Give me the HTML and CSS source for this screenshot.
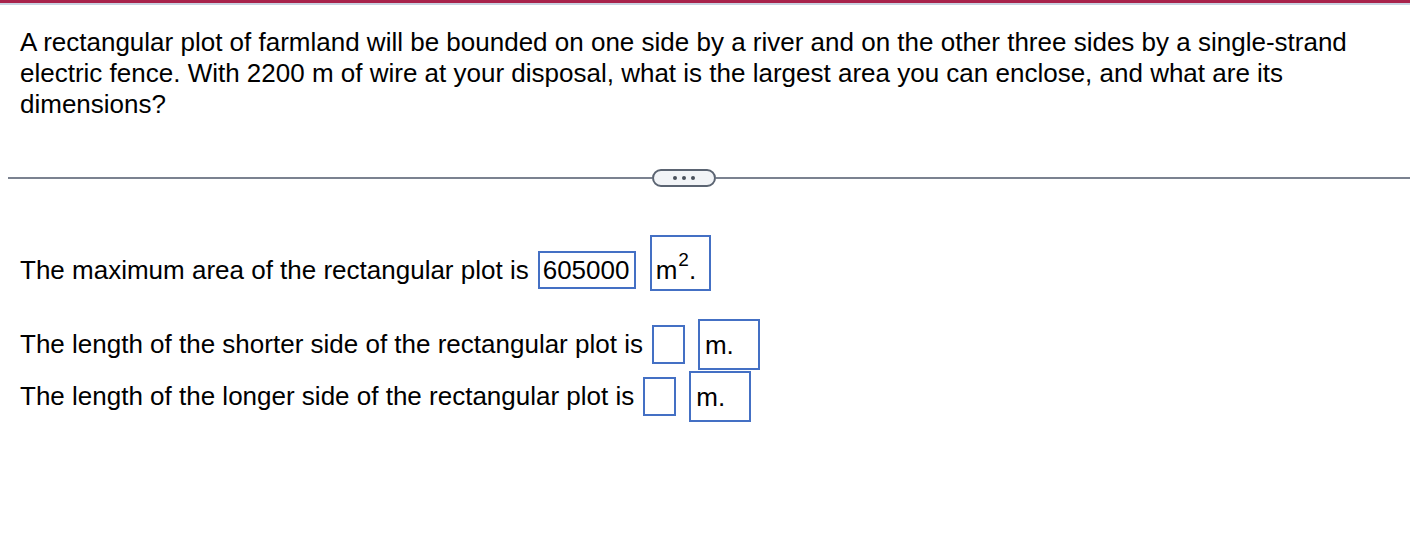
FILE: index.html
```html
<!DOCTYPE html>
<html>
<head>
<meta charset="utf-8">
<link rel="stylesheet" href="styles.css">
</head>
<body>
<div class="topbar"></div>
<div class="page">
  <p class="question">A rectangular plot of farmland will be bounded on one side by a river and on the other three sides by a single-strand electric fence. With 2200 m of wire at your disposal, what is the largest area you can enclose, and what are its dimensions?</p>
  <div class="divider">
    <span class="rule rule-left"></span>
    <span class="pill"><span class="dot"></span><span class="dot"></span><span class="dot"></span></span>
    <span class="rule rule-right"></span>
  </div>
  <div class="answers">
    <div class="row row-area">
      <span class="label">The maximum area of the rectangular plot is</span>
      <span class="box value">605000</span>
      <span class="box unit unit-sq">m<sup>2</sup>.</span>
    </div>
    <div class="row row-short">
      <span class="label">The length of the shorter side of the rectangular plot is</span>
      <span class="box empty"></span>
      <span class="box unit unit-m">m.</span>
    </div>
    <div class="row row-long">
      <span class="label">The length of the longer side of the rectangular plot is</span>
      <span class="box empty"></span>
      <span class="box unit unit-m">m.</span>
    </div>
  </div>
</div>
</body>
</html>
```
FILE: styles.css
```css
html, body {
  margin: 0;
  padding: 0;
  background: #ffffff;
}
body {
  font-family: "Liberation Sans", Arial, sans-serif;
  color: #000000;
  font-size: 26px;
}
.topbar {
  height: 3px;
  background: #a8234b;
  border-bottom: 2px solid #c9d3e1;
}
.page {
  padding: 0 0 0 8px;
}
.question {
  margin: 22px 0 0 12px;
  line-height: 31px;
  padding-right: 40px;
}
.divider {
  display: flex;
  align-items: center;
  margin-top: 49px;
  height: 18px;
}
.rule {
  height: 2px;
  background: #7b8290;
}
.rule-left {
  width: 644px;
}
.rule-right {
  flex: 1;
}
.pill {
  box-sizing: border-box;
  display: flex;
  align-items: center;
  justify-content: center;
  gap: 5px;
  width: 64px;
  height: 18px;
  border: 2px solid #5b6472;
  border-radius: 9px;
  background: #f2f4f7;
}
.dot {
  width: 4px;
  height: 4px;
  border-radius: 50%;
  background: #4a515c;
}
.answers {
  padding-left: 12px;
}
.row {
  display: flex;
  align-items: center;
}
.row-area {
  margin-top: 62px;
}
.row-short {
  margin-top: 28px;
}
.row-long {
  margin-top: 1px;
}
.box {
  box-sizing: border-box;
  border: 2px solid #4470c4;
  display: inline-block;
}
.value {
  margin-left: 9px;
  width: 98px;
  height: 38px;
  padding: 1px 0 0 3px;
  line-height: 32px;
}
.unit-sq {
  margin-left: 14px;
  width: 61px;
  height: 56px;
  padding: 16px 0 0 4px;
  line-height: 34px;
  margin-top: -14px;
}
.unit-sq sup {
  font-size: 19px;
  line-height: 0;
  vertical-align: 13px;
  margin-left: 1px;
}
.empty {
  margin-left: 9px;
  width: 33px;
  height: 39px;
}
.unit-m {
  margin-left: 13px;
  width: 62px;
  height: 51px;
  padding: 8px 0 0 5px;
  line-height: 32px;
}
```
